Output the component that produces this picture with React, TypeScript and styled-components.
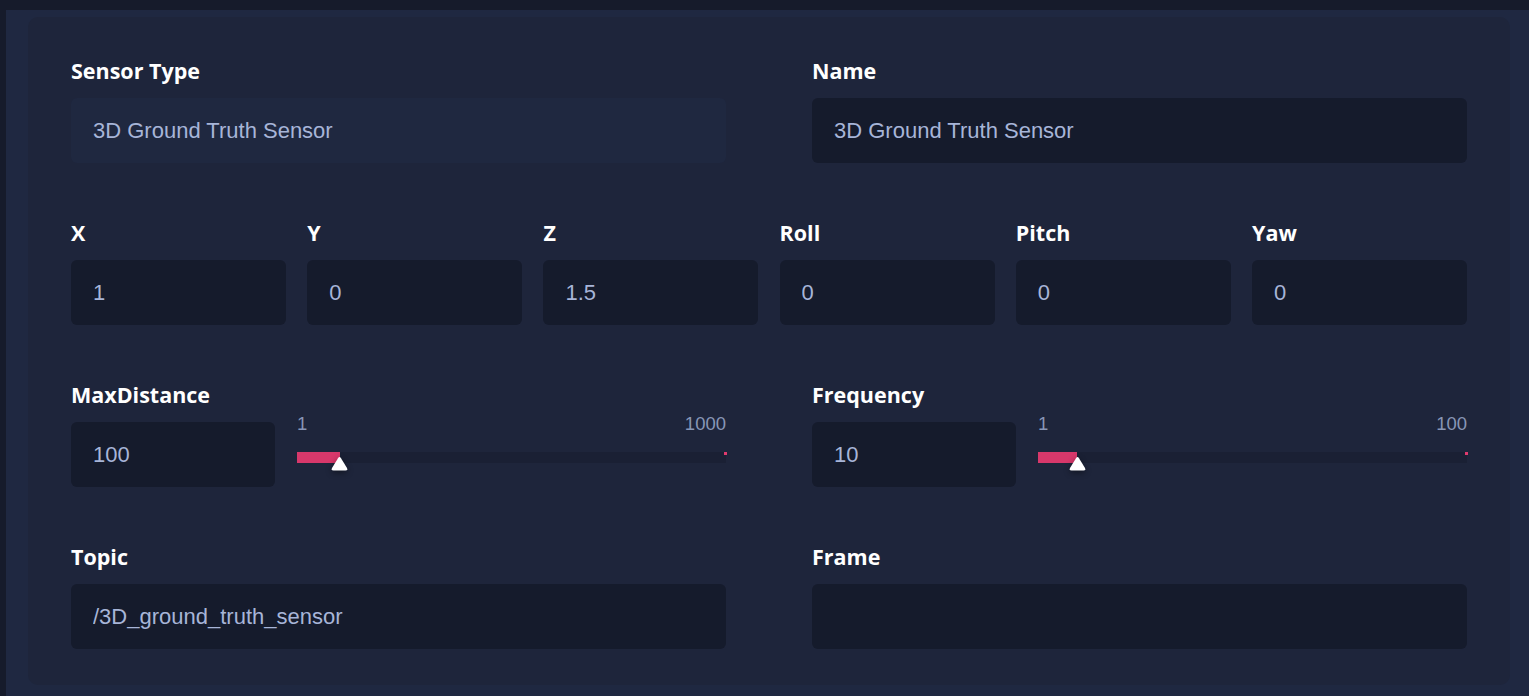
import React from "react";
import styled, { createGlobalStyle } from "styled-components";

const GlobalStyle = createGlobalStyle`
    html, body {
        margin: 0;
        padding: 0;
        background-color: #161b2b;
        height: 100%;
        overflow: hidden;
    }
    #root {
        padding: 10px 0 0 6px;
    }
`;

const Panel = styled.div`
    background-color: #1f2841;
    padding: 7px 19px 11px 22px;
    min-height: 686px;
    box-sizing: border-box;
`;

const Card = styled.div`
    background-color: #1e253b;
    border-radius: 10px;
    padding: 40px 43px 36px 43px;
    display: flex;
    flex-direction: column;
    gap: 56px;
`;

const Row = styled.div<{ $cols: number; $gap: number }>`
    display: grid;
    grid-template-columns: repeat(${(p) => p.$cols}, 1fr);
    column-gap: ${(p) => p.$gap}px;
`;

const Field = styled.div`
    display: flex;
    flex-direction: column;
    min-width: 0;
`;

const Label = styled.label`
    font-family: "Open Sans", "Noto Sans", sans-serif;
    font-weight: 700;
    font-size: 21.5px;
    line-height: 28px;
    color: #ffffff;
    margin-bottom: 13px;
`;

const Input = styled.input<{ $disabled?: boolean }>`
    height: 65px;
    box-sizing: border-box;
    border: none;
    outline: none;
    border-radius: 6px;
    padding: 0 22px;
    width: 100%;
    font-family: "Liberation Sans", Arial, sans-serif;
    font-size: 22px;
    color: #a7b5d8;
    background-color: ${(p) => (p.$disabled ? "#1f2840" : "#151b2c")};
`;

const SliderRow = styled.div`
    display: flex;
    align-items: flex-start;
    gap: 22px;
`;

const NumberBox = styled(Input)`
    width: 204px;
    flex-shrink: 0;
`;

const Slider = styled.div`
    flex: 1;
    margin-top: -7px;
    display: flex;
    flex-direction: column;
`;

const RangeLabels = styled.div`
    display: flex;
    justify-content: space-between;
    font-family: "Liberation Sans", Arial, sans-serif;
    font-size: 18.5px;
    line-height: 18px;
    color: #8896b6;
`;

const Track = styled.div`
    position: relative;
    margin-top: 19px;
    height: 11px;
    background-color: #1a2034;
`;

const Fill = styled.div`
    height: 100%;
    background-color: #d8386b;
`;

const EndDot = styled.span`
    position: absolute;
    right: -1px;
    top: 0;
    width: 3px;
    height: 3px;
    background-color: #e03a6e;
`;

const Thumb = styled.svg`
    position: absolute;
    top: 4px;
    width: 17px;
    height: 15px;
    margin-left: -8.5px;
    filter: drop-shadow(0 2px 3px rgba(0, 0, 0, 0.45));
`;

interface IRangeProps {
    value: number;
    min: number;
    max: number;
}

function RangeField({ value, min, max }: IRangeProps) {
    const pct = ((value - min) / (max - min)) * 100;
    return (
        <SliderRow>
            <NumberBox defaultValue={value} readOnly />
            <Slider>
                <RangeLabels>
                    <span>{min}</span>
                    <span>{max}</span>
                </RangeLabels>
                <Track>
                    <Fill style={{ width: `${pct}%` }} />
                    <EndDot />
                    <Thumb viewBox="0 0 17 15" style={{ left: `${pct}%` }}>
                        <path
                            d="M7 2.2 Q8.5 0 10 2.2 L16 12 Q17 14.5 14.5 14.5 L2.5 14.5 Q0 14.5 1 12 Z"
                            fill="#ffffff"
                        />
                    </Thumb>
                </Track>
            </Slider>
        </SliderRow>
    );
}

const poses = [
    { name: "X", value: "1" },
    { name: "Y", value: "0" },
    { name: "Z", value: "1.5" },
    { name: "Roll", value: "0" },
    { name: "Pitch", value: "0" },
    { name: "Yaw", value: "0" },
];

export default function App() {
    return (
        <>
            <GlobalStyle />
            <Panel>
                <Card>
                    <Row $cols={2} $gap={86}>
                        <Field>
                            <Label>Sensor Type</Label>
                            <Input $disabled defaultValue="3D Ground Truth Sensor" readOnly />
                        </Field>
                        <Field>
                            <Label>Name</Label>
                            <Input defaultValue="3D Ground Truth Sensor" />
                        </Field>
                    </Row>
                    <Row $cols={6} $gap={21.2}>
                        {poses.map((p) => (
                            <Field key={p.name}>
                                <Label>{p.name}</Label>
                                <Input defaultValue={p.value} />
                            </Field>
                        ))}
                    </Row>
                    <Row $cols={2} $gap={86}>
                        <Field>
                            <Label>MaxDistance</Label>
                            <RangeField value={100} min={1} max={1000} />
                        </Field>
                        <Field>
                            <Label>Frequency</Label>
                            <RangeField value={10} min={1} max={100} />
                        </Field>
                    </Row>
                    <Row $cols={2} $gap={86}>
                        <Field>
                            <Label>Topic</Label>
                            <Input defaultValue="/3D_ground_truth_sensor" />
                        </Field>
                        <Field>
                            <Label>Frame</Label>
                            <Input defaultValue="" />
                        </Field>
                    </Row>
                </Card>
            </Panel>
        </>
    );
}
